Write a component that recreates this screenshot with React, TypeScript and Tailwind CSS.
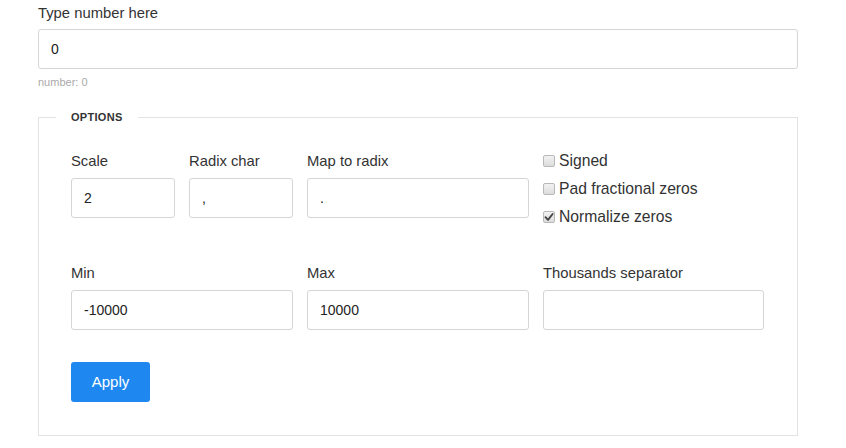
import { useState } from 'react'

const inputCls =
  'h-10 w-full rounded-[3px] border border-[#d5d5d5] bg-white px-3 text-[14px] text-[#222] outline-none focus:border-[#66afe9]'

function Field({ label, value, className = '' }: { label: string; value: string; className?: string }) {
  const [v, setV] = useState(value)
  return (
    <label className={`flex flex-col ${className}`}>
      <span className="mb-[7px] h-5 text-[14.8px] leading-5 text-[#333]">{label}</span>
      <input value={v} onChange={(e) => setV(e.target.value)} className={inputCls} />
    </label>
  )
}

function Check({ label, checked }: { label: string; checked?: boolean }) {
  const [on, setOn] = useState(!!checked)
  return (
    <label className="flex h-7 shrink-0 cursor-pointer items-center gap-[4px] text-[15.7px] text-[#333]" onClick={() => setOn((s) => !s)}>
      <span className="flex size-[12px] items-center justify-center rounded-[2px] border border-[#b8b8b8] bg-gradient-to-b from-[#f2f2f2] to-[#dcdcdc]">
        {on && (
          <svg width="10" height="10" viewBox="0 0 10 10">
            <path d="M1.5 5.2 L4 7.8 L8.6 2" fill="none" stroke="#444" strokeWidth="1.9" strokeLinecap="round" strokeLinejoin="round" />
          </svg>
        )}
      </span>
      {label}
    </label>
  )
}

export default function App() {
  const [num, setNum] = useState('0')
  return (
    <div className="min-h-screen bg-white pl-[38px] pt-[3px] font-['Liberation_Sans',Arial,sans-serif]">
      <div className="w-[760px]">
        <label className="flex flex-col">
          <span className="mb-[6px] h-5 text-[14.8px] leading-5 text-[#333]">Type number here</span>
          <input value={num} onChange={(e) => setNum(e.target.value)} className={inputCls} />
        </label>
        <div className="mt-[5px] text-[11px] leading-4 text-[#aaa]">number: {Number(num) || 0}</div>

        <fieldset className="mt-[19px] border border-[#e3e3e3]">
          <legend className="ml-[17px] px-[15px] text-[11px] font-bold leading-4 tracking-[0.3px] text-[#333]">OPTIONS</legend>
          <div className="px-[32px] pb-[33px] pt-[26px]">
            <div className="grid grid-cols-[104px_104px_222px_221px] items-start gap-x-[14px]">
              <Field label="Scale" value="2" />
              <Field label="Radix char" value="," />
              <Field label="Map to radix" value="." />
              <div className="-mt-[4px] flex h-[67px] flex-col overflow-visible">
                <Check label="Signed" />
                <Check label="Pad fractional zeros" />
                <Check label="Normalize zeros" checked />
              </div>
            </div>
            <div className="mt-[45px] grid grid-cols-[222px_222px_221px] gap-x-[14px]">
              <Field label="Min" value="-10000" />
              <Field label="Max" value="10000" />
              <Field label="Thousands separator" value="" />
            </div>
            <button
              type="button"
              className="mt-[32px] h-10 w-[79px] rounded-[3px] bg-[#1e88f0] text-[15px] text-white hover:bg-[#1a7ad8]"
            >
              Apply
            </button>
          </div>
        </fieldset>
      </div>
    </div>
  )
}
